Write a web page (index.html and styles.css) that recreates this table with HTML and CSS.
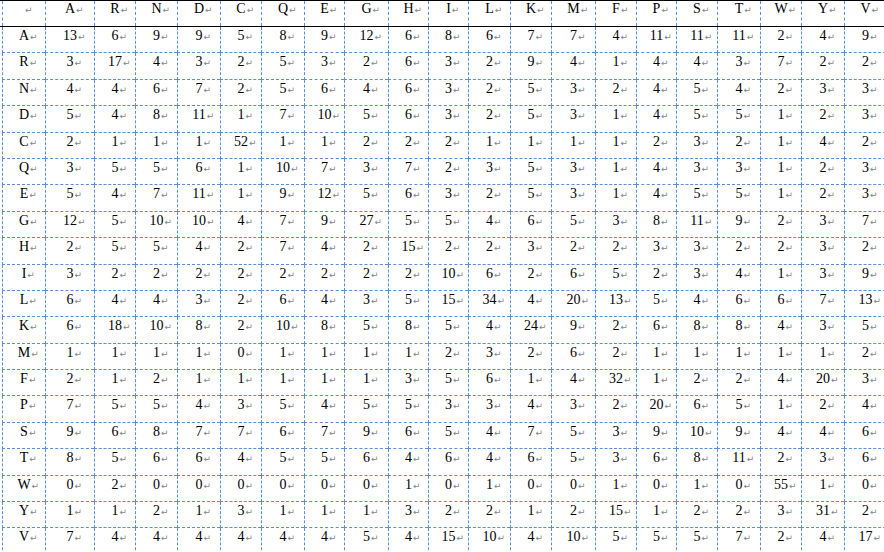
FILE: index.html
```html
<!DOCTYPE html>
<html lang="en">
<head>
<meta charset="utf-8">
<title>Matrix</title>
<link rel="stylesheet" href="styles.css">
</head>
<body>
<div class="sheet">
<div class="row head"><div class="c"><span class="pm">↵</span></div><div class="c">A<span class="pm">↵</span></div><div class="c">R<span class="pm">↵</span></div><div class="c">N<span class="pm">↵</span></div><div class="c">D<span class="pm">↵</span></div><div class="c">C<span class="pm">↵</span></div><div class="c">Q<span class="pm">↵</span></div><div class="c">E<span class="pm">↵</span></div><div class="c">G<span class="pm">↵</span></div><div class="c">H<span class="pm">↵</span></div><div class="c">I<span class="pm">↵</span></div><div class="c">L<span class="pm">↵</span></div><div class="c">K<span class="pm">↵</span></div><div class="c">M<span class="pm">↵</span></div><div class="c">F<span class="pm">↵</span></div><div class="c">P<span class="pm">↵</span></div><div class="c">S<span class="pm">↵</span></div><div class="c">T<span class="pm">↵</span></div><div class="c">W<span class="pm">↵</span></div><div class="c">Y<span class="pm">↵</span></div><div class="c">V<span class="pm">↵</span></div></div>
<div class="row"><div class="c">A<span class="pm">↵</span></div><div class="c">13<span class="pm">↵</span></div><div class="c">6<span class="pm">↵</span></div><div class="c">9<span class="pm">↵</span></div><div class="c">9<span class="pm">↵</span></div><div class="c">5<span class="pm">↵</span></div><div class="c">8<span class="pm">↵</span></div><div class="c">9<span class="pm">↵</span></div><div class="c">12<span class="pm">↵</span></div><div class="c">6<span class="pm">↵</span></div><div class="c">8<span class="pm">↵</span></div><div class="c">6<span class="pm">↵</span></div><div class="c">7<span class="pm">↵</span></div><div class="c">7<span class="pm">↵</span></div><div class="c">4<span class="pm">↵</span></div><div class="c">11<span class="pm">↵</span></div><div class="c">11<span class="pm">↵</span></div><div class="c">11<span class="pm">↵</span></div><div class="c">2<span class="pm">↵</span></div><div class="c">4<span class="pm">↵</span></div><div class="c">9<span class="pm">↵</span></div></div>
<div class="row"><div class="c">R<span class="pm">↵</span></div><div class="c">3<span class="pm">↵</span></div><div class="c">17<span class="pm">↵</span></div><div class="c">4<span class="pm">↵</span></div><div class="c">3<span class="pm">↵</span></div><div class="c">2<span class="pm">↵</span></div><div class="c">5<span class="pm">↵</span></div><div class="c">3<span class="pm">↵</span></div><div class="c">2<span class="pm">↵</span></div><div class="c">6<span class="pm">↵</span></div><div class="c">3<span class="pm">↵</span></div><div class="c">2<span class="pm">↵</span></div><div class="c">9<span class="pm">↵</span></div><div class="c">4<span class="pm">↵</span></div><div class="c">1<span class="pm">↵</span></div><div class="c">4<span class="pm">↵</span></div><div class="c">4<span class="pm">↵</span></div><div class="c">3<span class="pm">↵</span></div><div class="c">7<span class="pm">↵</span></div><div class="c">2<span class="pm">↵</span></div><div class="c">2<span class="pm">↵</span></div></div>
<div class="row"><div class="c">N<span class="pm">↵</span></div><div class="c">4<span class="pm">↵</span></div><div class="c">4<span class="pm">↵</span></div><div class="c">6<span class="pm">↵</span></div><div class="c">7<span class="pm">↵</span></div><div class="c">2<span class="pm">↵</span></div><div class="c">5<span class="pm">↵</span></div><div class="c">6<span class="pm">↵</span></div><div class="c">4<span class="pm">↵</span></div><div class="c">6<span class="pm">↵</span></div><div class="c">3<span class="pm">↵</span></div><div class="c">2<span class="pm">↵</span></div><div class="c">5<span class="pm">↵</span></div><div class="c">3<span class="pm">↵</span></div><div class="c">2<span class="pm">↵</span></div><div class="c">4<span class="pm">↵</span></div><div class="c">5<span class="pm">↵</span></div><div class="c">4<span class="pm">↵</span></div><div class="c">2<span class="pm">↵</span></div><div class="c">3<span class="pm">↵</span></div><div class="c">3<span class="pm">↵</span></div></div>
<div class="row"><div class="c">D<span class="pm">↵</span></div><div class="c">5<span class="pm">↵</span></div><div class="c">4<span class="pm">↵</span></div><div class="c">8<span class="pm">↵</span></div><div class="c">11<span class="pm">↵</span></div><div class="c">1<span class="pm">↵</span></div><div class="c">7<span class="pm">↵</span></div><div class="c">10<span class="pm">↵</span></div><div class="c">5<span class="pm">↵</span></div><div class="c">6<span class="pm">↵</span></div><div class="c">3<span class="pm">↵</span></div><div class="c">2<span class="pm">↵</span></div><div class="c">5<span class="pm">↵</span></div><div class="c">3<span class="pm">↵</span></div><div class="c">1<span class="pm">↵</span></div><div class="c">4<span class="pm">↵</span></div><div class="c">5<span class="pm">↵</span></div><div class="c">5<span class="pm">↵</span></div><div class="c">1<span class="pm">↵</span></div><div class="c">2<span class="pm">↵</span></div><div class="c">3<span class="pm">↵</span></div></div>
<div class="row"><div class="c">C<span class="pm">↵</span></div><div class="c">2<span class="pm">↵</span></div><div class="c">1<span class="pm">↵</span></div><div class="c">1<span class="pm">↵</span></div><div class="c">1<span class="pm">↵</span></div><div class="c">52<span class="pm">↵</span></div><div class="c">1<span class="pm">↵</span></div><div class="c">1<span class="pm">↵</span></div><div class="c">2<span class="pm">↵</span></div><div class="c">2<span class="pm">↵</span></div><div class="c">2<span class="pm">↵</span></div><div class="c">1<span class="pm">↵</span></div><div class="c">1<span class="pm">↵</span></div><div class="c">1<span class="pm">↵</span></div><div class="c">1<span class="pm">↵</span></div><div class="c">2<span class="pm">↵</span></div><div class="c">3<span class="pm">↵</span></div><div class="c">2<span class="pm">↵</span></div><div class="c">1<span class="pm">↵</span></div><div class="c">4<span class="pm">↵</span></div><div class="c">2<span class="pm">↵</span></div></div>
<div class="row"><div class="c">Q<span class="pm">↵</span></div><div class="c">3<span class="pm">↵</span></div><div class="c">5<span class="pm">↵</span></div><div class="c">5<span class="pm">↵</span></div><div class="c">6<span class="pm">↵</span></div><div class="c">1<span class="pm">↵</span></div><div class="c">10<span class="pm">↵</span></div><div class="c">7<span class="pm">↵</span></div><div class="c">3<span class="pm">↵</span></div><div class="c">7<span class="pm">↵</span></div><div class="c">2<span class="pm">↵</span></div><div class="c">3<span class="pm">↵</span></div><div class="c">5<span class="pm">↵</span></div><div class="c">3<span class="pm">↵</span></div><div class="c">1<span class="pm">↵</span></div><div class="c">4<span class="pm">↵</span></div><div class="c">3<span class="pm">↵</span></div><div class="c">3<span class="pm">↵</span></div><div class="c">1<span class="pm">↵</span></div><div class="c">2<span class="pm">↵</span></div><div class="c">3<span class="pm">↵</span></div></div>
<div class="row"><div class="c">E<span class="pm">↵</span></div><div class="c">5<span class="pm">↵</span></div><div class="c">4<span class="pm">↵</span></div><div class="c">7<span class="pm">↵</span></div><div class="c">11<span class="pm">↵</span></div><div class="c">1<span class="pm">↵</span></div><div class="c">9<span class="pm">↵</span></div><div class="c">12<span class="pm">↵</span></div><div class="c">5<span class="pm">↵</span></div><div class="c">6<span class="pm">↵</span></div><div class="c">3<span class="pm">↵</span></div><div class="c">2<span class="pm">↵</span></div><div class="c">5<span class="pm">↵</span></div><div class="c">3<span class="pm">↵</span></div><div class="c">1<span class="pm">↵</span></div><div class="c">4<span class="pm">↵</span></div><div class="c">5<span class="pm">↵</span></div><div class="c">5<span class="pm">↵</span></div><div class="c">1<span class="pm">↵</span></div><div class="c">2<span class="pm">↵</span></div><div class="c">3<span class="pm">↵</span></div></div>
<div class="row"><div class="c">G<span class="pm">↵</span></div><div class="c">12<span class="pm">↵</span></div><div class="c">5<span class="pm">↵</span></div><div class="c">10<span class="pm">↵</span></div><div class="c">10<span class="pm">↵</span></div><div class="c">4<span class="pm">↵</span></div><div class="c">7<span class="pm">↵</span></div><div class="c">9<span class="pm">↵</span></div><div class="c">27<span class="pm">↵</span></div><div class="c">5<span class="pm">↵</span></div><div class="c">5<span class="pm">↵</span></div><div class="c">4<span class="pm">↵</span></div><div class="c">6<span class="pm">↵</span></div><div class="c">5<span class="pm">↵</span></div><div class="c">3<span class="pm">↵</span></div><div class="c">8<span class="pm">↵</span></div><div class="c">11<span class="pm">↵</span></div><div class="c">9<span class="pm">↵</span></div><div class="c">2<span class="pm">↵</span></div><div class="c">3<span class="pm">↵</span></div><div class="c">7<span class="pm">↵</span></div></div>
<div class="row"><div class="c">H<span class="pm">↵</span></div><div class="c">2<span class="pm">↵</span></div><div class="c">5<span class="pm">↵</span></div><div class="c">5<span class="pm">↵</span></div><div class="c">4<span class="pm">↵</span></div><div class="c">2<span class="pm">↵</span></div><div class="c">7<span class="pm">↵</span></div><div class="c">4<span class="pm">↵</span></div><div class="c">2<span class="pm">↵</span></div><div class="c">15<span class="pm">↵</span></div><div class="c">2<span class="pm">↵</span></div><div class="c">2<span class="pm">↵</span></div><div class="c">3<span class="pm">↵</span></div><div class="c">2<span class="pm">↵</span></div><div class="c">2<span class="pm">↵</span></div><div class="c">3<span class="pm">↵</span></div><div class="c">3<span class="pm">↵</span></div><div class="c">2<span class="pm">↵</span></div><div class="c">2<span class="pm">↵</span></div><div class="c">3<span class="pm">↵</span></div><div class="c">2<span class="pm">↵</span></div></div>
<div class="row"><div class="c">I<span class="pm">↵</span></div><div class="c">3<span class="pm">↵</span></div><div class="c">2<span class="pm">↵</span></div><div class="c">2<span class="pm">↵</span></div><div class="c">2<span class="pm">↵</span></div><div class="c">2<span class="pm">↵</span></div><div class="c">2<span class="pm">↵</span></div><div class="c">2<span class="pm">↵</span></div><div class="c">2<span class="pm">↵</span></div><div class="c">2<span class="pm">↵</span></div><div class="c">10<span class="pm">↵</span></div><div class="c">6<span class="pm">↵</span></div><div class="c">2<span class="pm">↵</span></div><div class="c">6<span class="pm">↵</span></div><div class="c">5<span class="pm">↵</span></div><div class="c">2<span class="pm">↵</span></div><div class="c">3<span class="pm">↵</span></div><div class="c">4<span class="pm">↵</span></div><div class="c">1<span class="pm">↵</span></div><div class="c">3<span class="pm">↵</span></div><div class="c">9<span class="pm">↵</span></div></div>
<div class="row"><div class="c">L<span class="pm">↵</span></div><div class="c">6<span class="pm">↵</span></div><div class="c">4<span class="pm">↵</span></div><div class="c">4<span class="pm">↵</span></div><div class="c">3<span class="pm">↵</span></div><div class="c">2<span class="pm">↵</span></div><div class="c">6<span class="pm">↵</span></div><div class="c">4<span class="pm">↵</span></div><div class="c">3<span class="pm">↵</span></div><div class="c">5<span class="pm">↵</span></div><div class="c">15<span class="pm">↵</span></div><div class="c">34<span class="pm">↵</span></div><div class="c">4<span class="pm">↵</span></div><div class="c">20<span class="pm">↵</span></div><div class="c">13<span class="pm">↵</span></div><div class="c">5<span class="pm">↵</span></div><div class="c">4<span class="pm">↵</span></div><div class="c">6<span class="pm">↵</span></div><div class="c">6<span class="pm">↵</span></div><div class="c">7<span class="pm">↵</span></div><div class="c">13<span class="pm">↵</span></div></div>
<div class="row"><div class="c">K<span class="pm">↵</span></div><div class="c">6<span class="pm">↵</span></div><div class="c">18<span class="pm">↵</span></div><div class="c">10<span class="pm">↵</span></div><div class="c">8<span class="pm">↵</span></div><div class="c">2<span class="pm">↵</span></div><div class="c">10<span class="pm">↵</span></div><div class="c">8<span class="pm">↵</span></div><div class="c">5<span class="pm">↵</span></div><div class="c">8<span class="pm">↵</span></div><div class="c">5<span class="pm">↵</span></div><div class="c">4<span class="pm">↵</span></div><div class="c">24<span class="pm">↵</span></div><div class="c">9<span class="pm">↵</span></div><div class="c">2<span class="pm">↵</span></div><div class="c">6<span class="pm">↵</span></div><div class="c">8<span class="pm">↵</span></div><div class="c">8<span class="pm">↵</span></div><div class="c">4<span class="pm">↵</span></div><div class="c">3<span class="pm">↵</span></div><div class="c">5<span class="pm">↵</span></div></div>
<div class="row"><div class="c">M<span class="pm">↵</span></div><div class="c">1<span class="pm">↵</span></div><div class="c">1<span class="pm">↵</span></div><div class="c">1<span class="pm">↵</span></div><div class="c">1<span class="pm">↵</span></div><div class="c">0<span class="pm">↵</span></div><div class="c">1<span class="pm">↵</span></div><div class="c">1<span class="pm">↵</span></div><div class="c">1<span class="pm">↵</span></div><div class="c">1<span class="pm">↵</span></div><div class="c">2<span class="pm">↵</span></div><div class="c">3<span class="pm">↵</span></div><div class="c">2<span class="pm">↵</span></div><div class="c">6<span class="pm">↵</span></div><div class="c">2<span class="pm">↵</span></div><div class="c">1<span class="pm">↵</span></div><div class="c">1<span class="pm">↵</span></div><div class="c">1<span class="pm">↵</span></div><div class="c">1<span class="pm">↵</span></div><div class="c">1<span class="pm">↵</span></div><div class="c">2<span class="pm">↵</span></div></div>
<div class="row"><div class="c">F<span class="pm">↵</span></div><div class="c">2<span class="pm">↵</span></div><div class="c">1<span class="pm">↵</span></div><div class="c">2<span class="pm">↵</span></div><div class="c">1<span class="pm">↵</span></div><div class="c">1<span class="pm">↵</span></div><div class="c">1<span class="pm">↵</span></div><div class="c">1<span class="pm">↵</span></div><div class="c">1<span class="pm">↵</span></div><div class="c">3<span class="pm">↵</span></div><div class="c">5<span class="pm">↵</span></div><div class="c">6<span class="pm">↵</span></div><div class="c">1<span class="pm">↵</span></div><div class="c">4<span class="pm">↵</span></div><div class="c">32<span class="pm">↵</span></div><div class="c">1<span class="pm">↵</span></div><div class="c">2<span class="pm">↵</span></div><div class="c">2<span class="pm">↵</span></div><div class="c">4<span class="pm">↵</span></div><div class="c">20<span class="pm">↵</span></div><div class="c">3<span class="pm">↵</span></div></div>
<div class="row"><div class="c">P<span class="pm">↵</span></div><div class="c">7<span class="pm">↵</span></div><div class="c">5<span class="pm">↵</span></div><div class="c">5<span class="pm">↵</span></div><div class="c">4<span class="pm">↵</span></div><div class="c">3<span class="pm">↵</span></div><div class="c">5<span class="pm">↵</span></div><div class="c">4<span class="pm">↵</span></div><div class="c">5<span class="pm">↵</span></div><div class="c">5<span class="pm">↵</span></div><div class="c">3<span class="pm">↵</span></div><div class="c">3<span class="pm">↵</span></div><div class="c">4<span class="pm">↵</span></div><div class="c">3<span class="pm">↵</span></div><div class="c">2<span class="pm">↵</span></div><div class="c">20<span class="pm">↵</span></div><div class="c">6<span class="pm">↵</span></div><div class="c">5<span class="pm">↵</span></div><div class="c">1<span class="pm">↵</span></div><div class="c">2<span class="pm">↵</span></div><div class="c">4<span class="pm">↵</span></div></div>
<div class="row"><div class="c">S<span class="pm">↵</span></div><div class="c">9<span class="pm">↵</span></div><div class="c">6<span class="pm">↵</span></div><div class="c">8<span class="pm">↵</span></div><div class="c">7<span class="pm">↵</span></div><div class="c">7<span class="pm">↵</span></div><div class="c">6<span class="pm">↵</span></div><div class="c">7<span class="pm">↵</span></div><div class="c">9<span class="pm">↵</span></div><div class="c">6<span class="pm">↵</span></div><div class="c">5<span class="pm">↵</span></div><div class="c">4<span class="pm">↵</span></div><div class="c">7<span class="pm">↵</span></div><div class="c">5<span class="pm">↵</span></div><div class="c">3<span class="pm">↵</span></div><div class="c">9<span class="pm">↵</span></div><div class="c">10<span class="pm">↵</span></div><div class="c">9<span class="pm">↵</span></div><div class="c">4<span class="pm">↵</span></div><div class="c">4<span class="pm">↵</span></div><div class="c">6<span class="pm">↵</span></div></div>
<div class="row"><div class="c">T<span class="pm">↵</span></div><div class="c">8<span class="pm">↵</span></div><div class="c">5<span class="pm">↵</span></div><div class="c">6<span class="pm">↵</span></div><div class="c">6<span class="pm">↵</span></div><div class="c">4<span class="pm">↵</span></div><div class="c">5<span class="pm">↵</span></div><div class="c">5<span class="pm">↵</span></div><div class="c">6<span class="pm">↵</span></div><div class="c">4<span class="pm">↵</span></div><div class="c">6<span class="pm">↵</span></div><div class="c">4<span class="pm">↵</span></div><div class="c">6<span class="pm">↵</span></div><div class="c">5<span class="pm">↵</span></div><div class="c">3<span class="pm">↵</span></div><div class="c">6<span class="pm">↵</span></div><div class="c">8<span class="pm">↵</span></div><div class="c">11<span class="pm">↵</span></div><div class="c">2<span class="pm">↵</span></div><div class="c">3<span class="pm">↵</span></div><div class="c">6<span class="pm">↵</span></div></div>
<div class="row"><div class="c">W<span class="pm">↵</span></div><div class="c">0<span class="pm">↵</span></div><div class="c">2<span class="pm">↵</span></div><div class="c">0<span class="pm">↵</span></div><div class="c">0<span class="pm">↵</span></div><div class="c">0<span class="pm">↵</span></div><div class="c">0<span class="pm">↵</span></div><div class="c">0<span class="pm">↵</span></div><div class="c">0<span class="pm">↵</span></div><div class="c">1<span class="pm">↵</span></div><div class="c">0<span class="pm">↵</span></div><div class="c">1<span class="pm">↵</span></div><div class="c">0<span class="pm">↵</span></div><div class="c">0<span class="pm">↵</span></div><div class="c">1<span class="pm">↵</span></div><div class="c">0<span class="pm">↵</span></div><div class="c">1<span class="pm">↵</span></div><div class="c">0<span class="pm">↵</span></div><div class="c">55<span class="pm">↵</span></div><div class="c">1<span class="pm">↵</span></div><div class="c">0<span class="pm">↵</span></div></div>
<div class="row"><div class="c">Y<span class="pm">↵</span></div><div class="c">1<span class="pm">↵</span></div><div class="c">1<span class="pm">↵</span></div><div class="c">2<span class="pm">↵</span></div><div class="c">1<span class="pm">↵</span></div><div class="c">3<span class="pm">↵</span></div><div class="c">1<span class="pm">↵</span></div><div class="c">1<span class="pm">↵</span></div><div class="c">1<span class="pm">↵</span></div><div class="c">3<span class="pm">↵</span></div><div class="c">2<span class="pm">↵</span></div><div class="c">2<span class="pm">↵</span></div><div class="c">1<span class="pm">↵</span></div><div class="c">2<span class="pm">↵</span></div><div class="c">15<span class="pm">↵</span></div><div class="c">1<span class="pm">↵</span></div><div class="c">2<span class="pm">↵</span></div><div class="c">2<span class="pm">↵</span></div><div class="c">3<span class="pm">↵</span></div><div class="c">31<span class="pm">↵</span></div><div class="c">2<span class="pm">↵</span></div></div>
<div class="row"><div class="c">V<span class="pm">↵</span></div><div class="c">7<span class="pm">↵</span></div><div class="c">4<span class="pm">↵</span></div><div class="c">4<span class="pm">↵</span></div><div class="c">4<span class="pm">↵</span></div><div class="c">4<span class="pm">↵</span></div><div class="c">4<span class="pm">↵</span></div><div class="c">4<span class="pm">↵</span></div><div class="c">5<span class="pm">↵</span></div><div class="c">4<span class="pm">↵</span></div><div class="c">15<span class="pm">↵</span></div><div class="c">10<span class="pm">↵</span></div><div class="c">4<span class="pm">↵</span></div><div class="c">10<span class="pm">↵</span></div><div class="c">5<span class="pm">↵</span></div><div class="c">5<span class="pm">↵</span></div><div class="c">5<span class="pm">↵</span></div><div class="c">7<span class="pm">↵</span></div><div class="c">2<span class="pm">↵</span></div><div class="c">4<span class="pm">↵</span></div><div class="c">17<span class="pm">↵</span></div></div>
</div>
</body>
</html>
```

FILE: styles.css
```css
html, body {
  margin: 0;
  padding: 0;
  background: #ffffff;
  overflow: hidden;
}

.sheet {
  width: 886px;
  font-family: "Liberation Serif", "Times New Roman", serif;
  font-size: 14px;
  color: #000000;
}

.row {
  display: flex;
  box-sizing: border-box;
  height: 26.4px;
  padding-left: 2px;
}

.row.head {
  height: 27px;
  border-top: 1px solid #000000;
  border-bottom: 1px solid #000000;
}

.c {
  flex: none;
  box-sizing: border-box;
  border-left: 1px dashed #5b8fd6;
  border-bottom: 1px dashed #5b8fd6;
  text-align: center;
  line-height: 16px;
  padding-top: 1px;
  white-space: nowrap;
}

.head .c {
  border-bottom: none;
  padding-top: 0;
}

.pm {
  display: inline-block;
  width: 0;
  overflow: visible;
  font-family: "DejaVu Sans", sans-serif;
  font-size: 9px;
  color: #858585;
  text-indent: 1px;
}

.c:nth-child(1) { width: 43px; }
.c:nth-child(2) { width: 49px; }
.c:nth-child(3) { width: 41px; }
.c:nth-child(4) { width: 42px; }
.c:nth-child(5) { width: 43px; }
.c:nth-child(6) { width: 41px; }
.c:nth-child(7) { width: 43px; }
.c:nth-child(8) { width: 40px; }
.c:nth-child(9) { width: 44px; }
.c:nth-child(10) { width: 40px; }
.c:nth-child(11) { width: 40px; }
.c:nth-child(12) { width: 42px; }
.c:nth-child(13) { width: 41px; }
.c:nth-child(14) { width: 44px; }
.c:nth-child(15) { width: 41px; }
.c:nth-child(16) { width: 40px; }
.c:nth-child(17) { width: 41px; }
.c:nth-child(18) { width: 43px; }
.c:nth-child(19) { width: 41px; }
.c:nth-child(20) { width: 43px; }
.c:nth-child(21) { width: 42px; }
```
